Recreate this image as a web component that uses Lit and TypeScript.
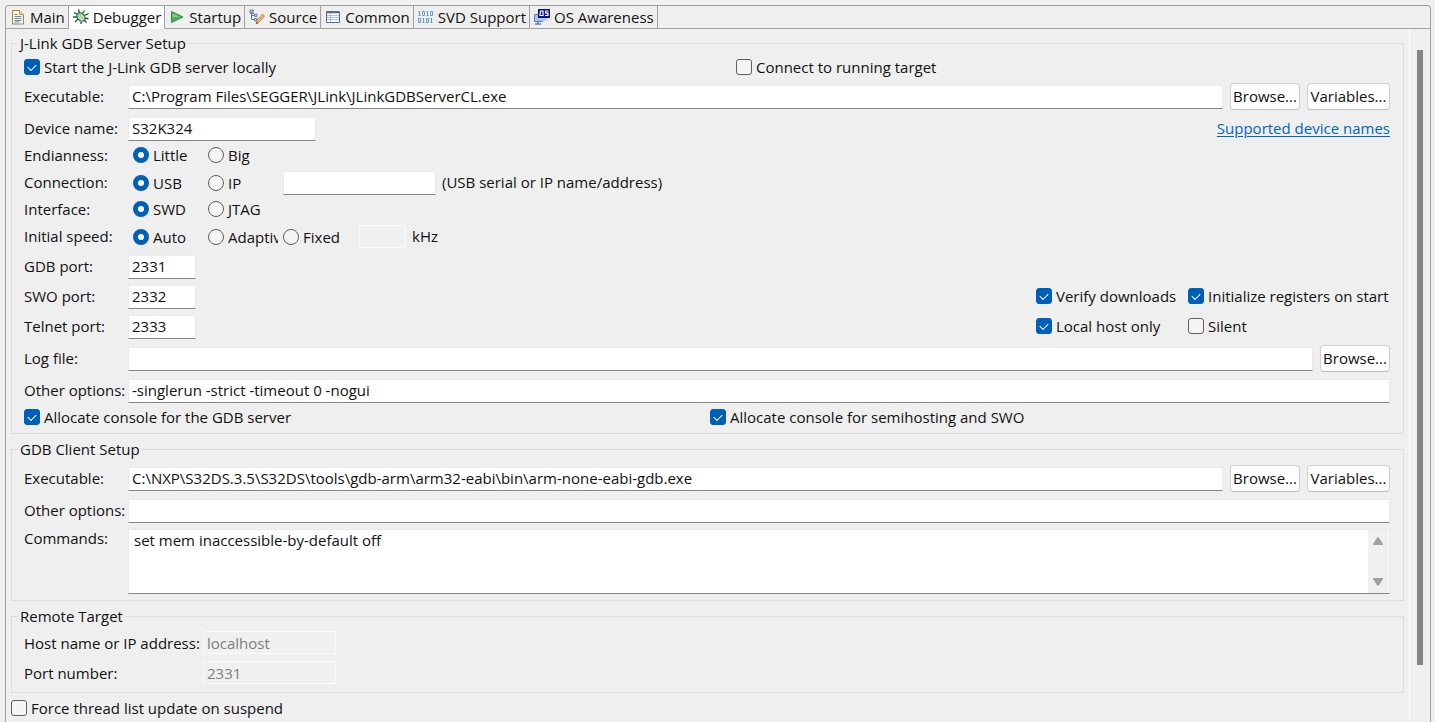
import { LitElement, html, css, svg, nothing } from "lit";
import { customElement, property, state } from "lit/decorators.js";

const icons: Record<string, unknown> = {
  main: svg`<path d="M2.500 1.500h7l4 4v9.500h-11z" fill="#fdf8e3" stroke="#9c8250"/><path d="M9.500 1.500v4h4" fill="#f3dc9a" stroke="#b8963f"/><path d="M4.500 5.500h3M4.500 7.500h7M4.500 9.500h7M4.500 11.500h7M4.500 13h5" stroke="#5f86b8" stroke-width="1"/>`,
  bug: svg`<path d="M5.500 0.500l1 4M11.500 1.500l-2 3M1 3.500l4 2.500M15.500 4.500l-4 2M0 8h4.500M15.500 9.500H12M2 13l3-3M13.500 13.500l-3-3M8 15v-2" stroke="#1d4d43" stroke-width="1.300" fill="none"/><ellipse cx="8" cy="8" rx="3.600" ry="4.800" transform="rotate(-40 8 8)" fill="#9ccb8b" stroke="#1f5f4a"/><path d="M5.500 6l4.500 5M6 8.500l3 3M8 5.500l3 3.500" stroke="#e4f3d8" stroke-width=".9"/>`,
  play: svg`<path d="M2.500 2.500v11L14 8z" fill="#4fae5c" stroke="#2f8b41"/><path d="M3.500 4.500v3.500h8z" fill="#86cf8a"/>`,
  source: svg`<path d="M1 1.500h4M1 4.500h4M2.500 1v9.500H6M2.500 6.500H6" stroke="#5877a6" fill="none"/><path d="M1 1h3v3H1zM5.500 5h2.500v2.500H5.500zM5.500 9.500H8V12H5.500z" fill="#a9bfdd" stroke="#5877a6" stroke-width=".8"/><path d="M7 15l1.200-4.200L13.500 5 15.500 7l-5.300 6.200z" fill="#f1b66d" stroke="#b9793a" stroke-width=".8"/><path d="M7 15l.7-2.200 1.500 1.200z" fill="#5b4a3c"/>`,
  common: svg`<path d="M1.500 2.500h13v11h-13z" fill="#f7faff" stroke="#566b93"/><path d="M1.500 3.500h13" stroke="#566b93" stroke-width="1.500"/><path d="M5.500 4v9M2 6.500h12M2 8.500h12M2 10.500h12" stroke="#a9b9d4" stroke-width=".9"/>`,
  binary: svg`<g fill="none" stroke="#5a9fc9" stroke-width="1"><path d="M1.500 2v5M.5 2.500h1M.5 6.500h2M4.500 2.500h2v4h-2zM9.500 2v5M8.500 2.500h1M8.500 6.500h2M12.500 2.500h2v4h-2z"/><path d="M.5 9.500h2v4h-2zM5.500 9v5M4.500 9.500h1M4.500 13.500h2M8.500 9.500h2v4h-2zM13.500 9v5M12.500 9.500h1M12.500 13.500h2"/></g>`,
  os: svg`<path d="M.5 5.500h8v7h-8z" fill="#a9c4e6" stroke="#5a7fae"/><path d="M1 15h6M4 12.500v2.500" stroke="#5a7fae" stroke-width="1.500"/><path d="M7 9h8l-6 4z" fill="#b7c7df"/><path d="M4 0h12v9H4z" fill="#10108c"/><path d="M6.500 2h2.500v4.500H6zM14.500 2H11.700v2.200h2.300V6.500h-3" fill="none" stroke="#fff" stroke-width="1.200"/>`,
};

@customElement("choice-box")
class ChoiceBox extends LitElement {
  @property() label = "";
  @property() type = "checkbox";
  @property() name = "";
  @property({ type: Boolean }) checked = false;

  static styles = css`
    :host { display: block; min-width: 0; overflow: hidden; }
    label { display: flex; align-items: center; gap: 4px; line-height: 22px; white-space: nowrap; }
    input { appearance: none; flex: none; display: grid; place-items: center; box-sizing: border-box; width: 16px; height: 16px; margin: 0; border: 1px solid #5f5f5f; border-radius: 3px; background: #f5f5f5; }
    input[type="radio"] { border-radius: 50%; }
    input:checked { border-color: #005fb8; background: #005fb8; }
    input[type="checkbox"]:checked::after { content: ""; box-sizing: border-box; width: 8px; height: 5px; margin-top: -2px; border: solid #fff; border-width: 0 0 1px 1px; transform: rotate(-45deg); }
    input[type="radio"]:checked { border-width: 5px; background: #fff; }
  `;

  render() {
    return html`<label><input type=${this.type} name=${this.name || nothing} .checked=${this.checked} /><span>${this.label}</span></label>`;
  }
}

@customElement("app-root")
class AppRoot extends LitElement {
  @state() private tab = "Debugger";

  private tabs = [
    ["Main", "main"],
    ["Debugger", "bug"],
    ["Startup", "play"],
    ["Source", "source"],
    ["Common", "common"],
    ["SVD Support", "binary"],
    ["OS Awareness", "os"],
  ];

  static styles = css`
    :host { display: flex; box-sizing: border-box; height: 100vh; padding: 5px 4px 0 5px; overflow: hidden; background: #f0f0f0; color: #111; font-family: "Open Sans", "Noto Sans", sans-serif; font-size: 15px; line-height: 22px; }
    .folder { flex: 1; display: flex; flex-direction: column; min-width: 0; border: 1px solid #a0a0a0; border-bottom: 0; border-radius: 4px 4px 0 0; background: #efefef; }
    .tabs { display: flex; height: 23px; }
    .tabs::after { content: ""; flex: 1; border-bottom: 1px solid #a0a0a0; }
    .tab { display: flex; align-items: center; gap: 4px; padding: 0 3px 0 4px; border: 0; border-right: 1px solid #a0a0a0; border-bottom: 1px solid #a0a0a0; background: none; color: inherit; font: inherit; white-space: nowrap; }
    .tab.active { border-bottom-color: #fff; background: #fff; }
    .tab svg { flex: none; width: 16px; height: 16px; }
    .body { flex: 1; display: flex; min-height: 0; }
    .page { flex: 1; min-width: 0; padding: 3px 5px 0; border-right: 1px solid #fff; overflow: hidden; }
    .track { flex: none; display: flex; flex-direction: column; width: 20px; padding: 21px 0 57px; box-sizing: border-box; align-items: center; }
    .thumb { flex: 1; width: 6px; background: #858585; }

    fieldset { margin: 0 0 4px; padding: 2px 13px 5px 12px; border: 1px solid #dcdcdc; min-width: 0; }
    fieldset.client { padding-top: 5px; padding-bottom: 6px; }
    fieldset.target { padding-top: 4px; padding-bottom: 8px; }
    legend { margin-left: -6px; padding: 0 2px; }
    .rows { display: grid; gap: 6px; }
    .radios { display: grid; gap: 5px; margin-top: 3px; }
    .ports { display: flex; justify-content: space-between; align-items: flex-end; margin-top: 8px; }
    .files { margin-top: 6px; }
    .row { display: grid; grid-template-columns: 104px minmax(0, 1fr); align-items: center; }
    .row > label, .row > .caption { white-space: nowrap; }
    .row > label, .line > label, .line > a { line-height: 20px; padding-bottom: 2px; }
    .split { display: grid; grid-template-columns: 712fr 654fr; height: 21px; }
    .halves { display: grid; grid-template-columns: 1fr 1fr; column-gap: 6px; margin-top: 3px; }
    .line { display: flex; align-items: center; gap: 7px; min-width: 0; }
    .picker { padding-bottom: 1px; }
    .between { justify-content: space-between; }
    .options { display: grid; grid-template-columns: 75px 75px 76px auto 1fr; align-items: center; height: 22px; padding-left: 5px; column-gap: 0; }
    .options choice-box { margin-right: 5px; }
    .options .line { gap: 6px; }
    .aside { grid-column: 3 / -1; }
    .checks { display: grid; grid-template-columns: 152px 202px; row-gap: 8px; padding-bottom: 2px; }

    input, textarea { box-sizing: border-box; border: 1px solid #e9e9e9; border-bottom-color: #868686; border-radius: 0; background: #fff; color: inherit; font: inherit; outline: 0; }
    input { width: 100%; min-width: 0; height: 24px; padding: 0 3px 2px; }
    input.device { width: 188px; }
    input.serial { width: 153px; }
    input.port { width: 68px; }
    input.speed { width: 47px; height: 23px; }
    input:disabled { border-color: #fafafa; background: #f0f0f0; color: #7d7d7d; }
    button.push { flex: none; height: 27px; width: 70px; padding: 0 0 2px; border: 1px solid #d0d0d0; border-bottom-color: #bcbcbc; border-radius: 4px; background: #fdfdfd; color: inherit; font: inherit; white-space: nowrap; }
    button.wide { width: 83px; }
    a { color: #0066bf; text-underline-offset: 2px; }
    .row.top { align-items: start; }
    .row.top > label { line-height: 18px; }
    .memo { display: flex; height: 65px; box-sizing: border-box; border: 1px solid #e9e9e9; border-bottom-color: #868686; background: #fff; }
    .memo textarea { flex: 1; min-width: 0; border: 0; padding: 0 5px; line-height: 20px; resize: none; overflow: hidden; }
    .steps { display: flex; flex-direction: column; justify-content: space-between; align-items: center; width: 20px; margin-right: 1px; padding: 6px 0; background: #f0f0f0; box-sizing: border-box; }
    .steps svg { width: 10px; height: 10px; fill: #a0a0a0; }
    .remote { gap: 7px; }
    .remote .row { grid-template-columns: 179px 133px; }
    .remote .row > label { line-height: 22px; padding-bottom: 0; }
    .remote input { height: 23px; padding-bottom: 0; }
  `;

  private executable(id: string, value: string) {
    return html`<div class="row picker">
      <label for=${id}>Executable:</label>
      <div class="line">
        <input id=${id} type="text" .value=${value} />
        <button class="push">Browse...</button>
        <button class="push wide">Variables...</button>
      </div>
    </div>`;
  }

  private field(id: string, label: string, value: string, cls = "", disabled = false) {
    return html`<div class="row">
      <label for=${id}>${label}</label>
      <input id=${id} class=${cls} type="text" .value=${value} ?disabled=${disabled} />
    </div>`;
  }

  private radios(caption: string, items: string[], extra: unknown = nothing) {
    return html`<div class="row" role="radiogroup" aria-label=${caption}>
      <span class="caption">${caption}</span>
      <div class="options">
        ${items.map((item, i) => html`<choice-box type="radio" .label=${item} ?checked=${i === 0}></choice-box>`)} ${extra}
      </div>
    </div>`;
  }

  render() {
    return html`<div class="folder">
      <div class="tabs" role="tablist">
        ${this.tabs.map(
          ([name, icon]) => html`<button
            class="tab ${name === this.tab ? "active" : ""}"
            role="tab"
            aria-selected=${name === this.tab}
            @click=${() => (this.tab = name)}
          ><svg viewBox="0 0 16 16" aria-hidden="true">${icons[icon]}</svg>${name}</button>`
        )}
      </div>
      <div class="body">
        <div class="page">
          <fieldset>
            <legend>J-Link GDB Server Setup</legend>
            <div class="rows">
              <div class="split">
                <choice-box label="Start the J-Link GDB server locally" checked></choice-box>
                <choice-box label="Connect to running target"></choice-box>
              </div>
              ${this.executable("server-exe", "C:\\Program Files\\SEGGER\\JLink\\JLinkGDBServerCL.exe")}
              <div class="row">
                <label for="device">Device name:</label>
                <div class="line between">
                  <input id="device" class="device" type="text" value="S32K324" />
                  <a href="#devices">Supported device names</a>
                </div>
              </div>
            </div>
            <div class="radios">
              ${this.radios("Endianness:", ["Little", "Big"])}
              ${this.radios(
                "Connection:",
                ["USB", "IP"],
                html`<div class="line aside"><input id="serial" class="serial" type="text" /><label for="serial">(USB serial or IP name/address)</label></div>`
              )}
              ${this.radios("Interface:", ["SWD", "JTAG"])}
              ${this.radios(
                "Initial speed:",
                ["Auto", "Adaptive", "Fixed"],
                html`<div class="line"><input id="speed" class="speed" type="text" disabled /><label for="speed">kHz</label></div>`
              )}
            </div>
            <div class="ports">
              <div class="rows">
                ${this.field("gdb-port", "GDB port:", "2331", "port")}
                ${this.field("swo-port", "SWO port:", "2332", "port")}
                ${this.field("telnet-port", "Telnet port:", "2333", "port")}
              </div>
              <div class="checks">
                <choice-box label="Verify downloads" checked></choice-box>
                <choice-box label="Initialize registers on start" checked></choice-box>
                <choice-box label="Local host only" checked></choice-box>
                <choice-box label="Silent"></choice-box>
              </div>
            </div>
            <div class="rows files">
              <div class="row picker">
                <label for="log">Log file:</label>
                <div class="line">
                  <input id="log" type="text" />
                  <button class="push">Browse...</button>
                </div>
              </div>
              ${this.field("server-options", "Other options:", "-singlerun -strict -timeout 0 -nogui")}
            </div>
            <div class="halves">
              <choice-box label="Allocate console for the GDB server" checked></choice-box>
              <choice-box label="Allocate console for semihosting and SWO" checked></choice-box>
            </div>
          </fieldset>

          <fieldset class="client">
            <legend>GDB Client Setup</legend>
            <div class="rows">
              ${this.executable("client-exe", "C:\\NXP\\S32DS.3.5\\S32DS\\tools\\gdb-arm\\arm32-eabi\\bin\\arm-none-eabi-gdb.exe")}
              ${this.field("client-options", "Other options:", "")}
              <div class="row top">
                <label for="commands">Commands:</label>
                <div class="memo">
                  <textarea id="commands" .value=${"set mem inaccessible-by-default off"}></textarea>
                  <div class="steps" aria-hidden="true">
                    <svg viewBox="0 0 10 10"><path d="M4.200 1.500h1.600L10 8v1H0V8z" /></svg>
                    <svg viewBox="0 0 10 10"><path d="M4.200 8.500h1.600L10 2V1H0v1z" /></svg>
                  </div>
                </div>
              </div>
            </div>
          </fieldset>

          <fieldset class="target">
            <legend>Remote Target</legend>
            <div class="rows remote">
              ${this.field("host", "Host name or IP address:", "localhost", "", true)}
              ${this.field("port", "Port number:", "2331", "", true)}
            </div>
          </fieldset>
          <choice-box label="Force thread list update on suspend"></choice-box>
        </div>
        <div class="track"><div class="thumb"></div></div>
      </div>
    </div>`;
  }
}
